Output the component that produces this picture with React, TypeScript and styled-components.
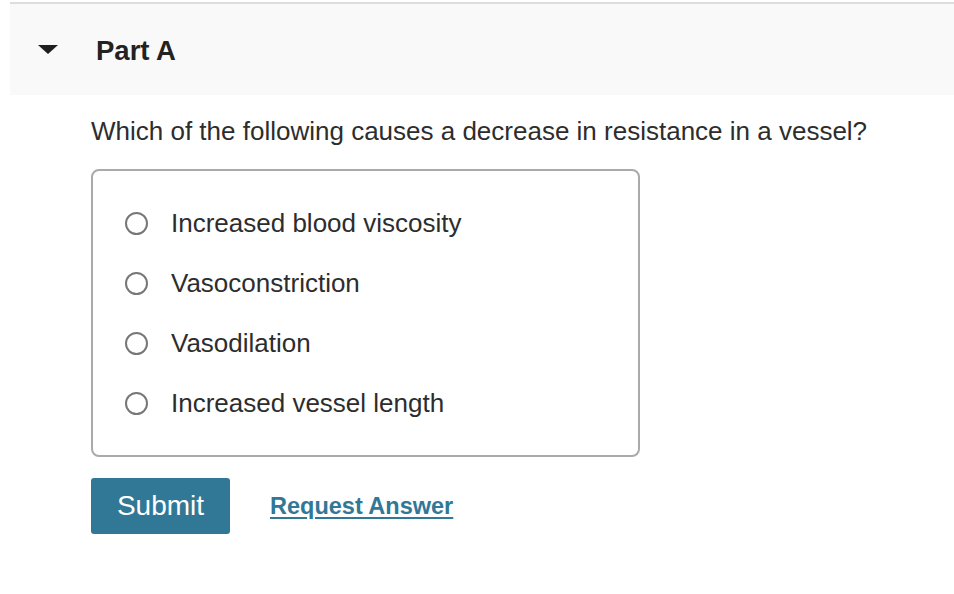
import React from "react";
import styled, { createGlobalStyle } from "styled-components";

const GlobalStyle = createGlobalStyle`
  html, body { margin: 0; padding: 0; background: #ffffff; }
  body { font-family: "Liberation Sans", Arial, Helvetica, sans-serif; color: #2d2d2d; }
`;

const Page = styled.div`
  padding: 2px 0 0 10px;
`;

const Header = styled.div`
  display: flex;
  align-items: center;
  height: 91px;
  background: #f9f9f9;
  border-top: 2px solid #dddddd;
`;

const Caret = styled.span`
  display: block;
  width: 0;
  height: 0;
  margin-left: 28px;
  border-left: 10px solid transparent;
  border-right: 10px solid transparent;
  border-top: 9px solid #1f1f1f;
`;

const Title = styled.h2`
  margin: 3px 0 0 38px;
  font-size: 27.5px;
  font-weight: 700;
  color: #222222;
`;

const Body = styled.div`
  padding: 20px 0 0 81px;
`;

const Question = styled.p`
  margin: 0;
  font-size: 26px;
  line-height: 32px;
  color: #2d2d2d;
`;

const Choices = styled.div`
  margin-top: 22px;
  width: 549px;
  box-sizing: border-box;
  border: 2px solid #aaaaaa;
  border-radius: 8px;
  padding: 22px 0 22px 32px;
  display: flex;
  flex-direction: column;
`;

const Choice = styled.label`
  display: flex;
  align-items: center;
  height: 60px;
  font-size: 26px;
  color: #2d2d2d;
`;

const Radio = styled.span`
  display: block;
  width: 19px;
  height: 19px;
  border: 2px solid #777777;
  border-radius: 50%;
  margin-right: 23px;
`;

const Actions = styled.div`
  display: flex;
  align-items: center;
  margin-top: 21px;
  gap: 40px;
`;

const SubmitButton = styled.button`
  width: 139px;
  height: 56px;
  border: none;
  border-radius: 3px;
  background: #317896;
  color: #ffffff;
  font-family: "Liberation Sans", Arial, sans-serif;
  font-size: 28px;
  padding: 0;
`;

const LinkText = styled.a`
  font-size: 23.5px;
  font-weight: 700;
  color: #317896;
  text-decoration: underline;
  text-underline-offset: 3px;
`;

const options = [
  "Increased blood viscosity",
  "Vasoconstriction",
  "Vasodilation",
  "Increased vessel length",
];

export default function App() {
  return (
    <>
      <GlobalStyle />
      <Page>
        <Header>
          <Caret />
          <Title>Part A</Title>
        </Header>
        <Body>
          <Question>Which of the following causes a decrease in resistance in a vessel?</Question>
          <Choices>
            {options.map((o) => (
              <Choice key={o}>
                <Radio />
                {o}
              </Choice>
            ))}
          </Choices>
          <Actions>
            <SubmitButton>Submit</SubmitButton>
            <LinkText href="#">Request Answer</LinkText>
          </Actions>
        </Body>
      </Page>
    </>
  );
}
